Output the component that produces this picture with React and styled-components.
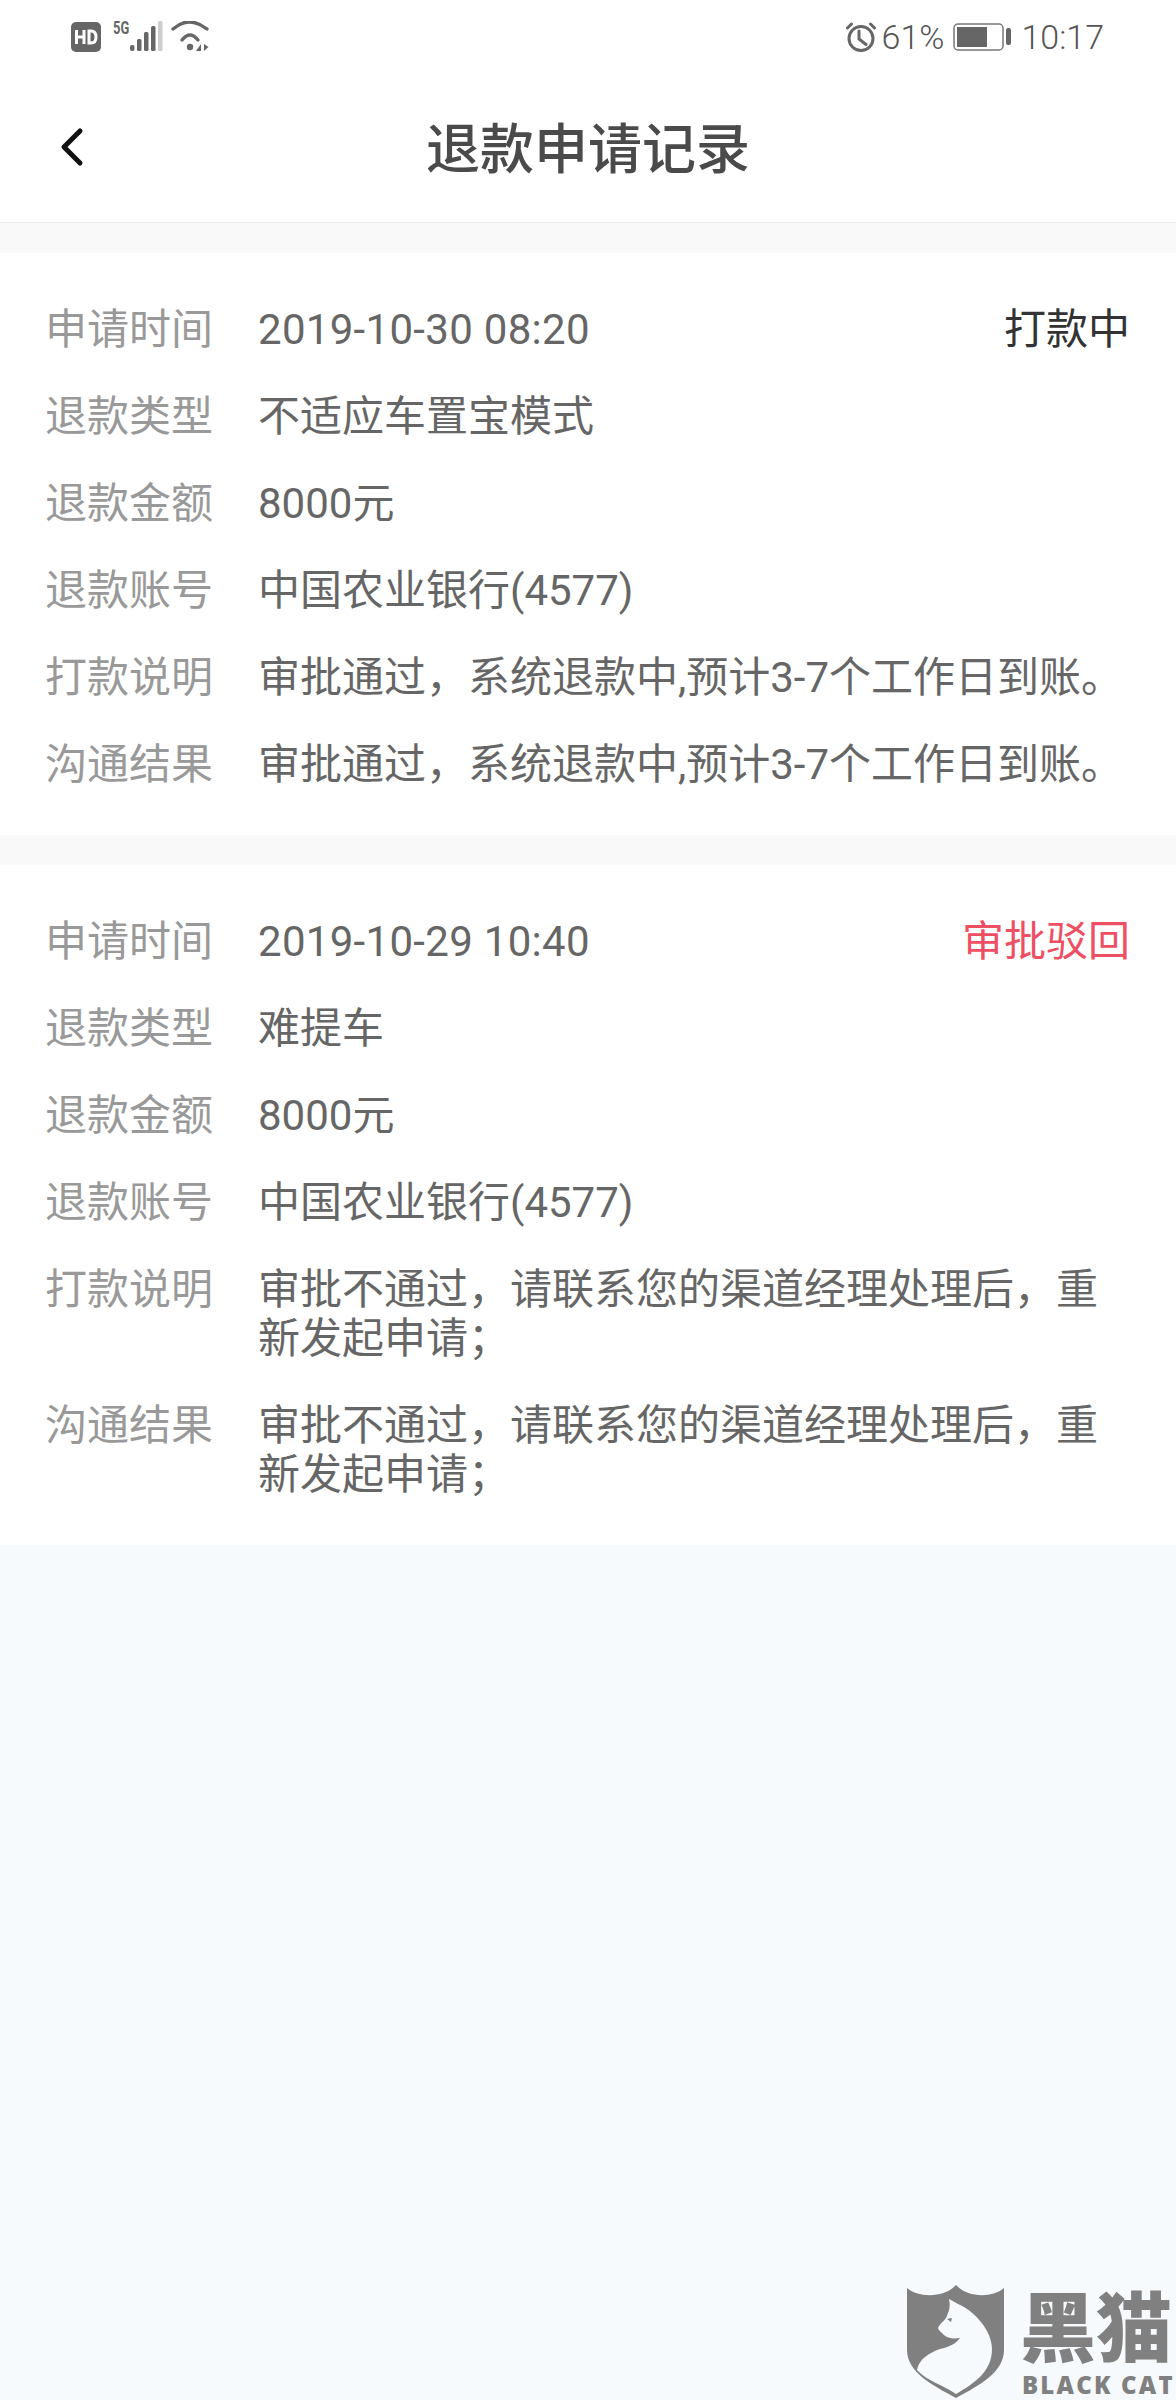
import React from "react";
import styled, { createGlobalStyle } from "styled-components";

const Global = createGlobalStyle`
  html, body { margin: 0; padding: 0; background: #f6fafd; }
  * { box-sizing: border-box; }
`;

const FONT = `Roboto, "Noto Sans CJK SC", sans-serif`;

const Page = styled.div`
  position: relative;
  width: 1176px;
  height: 2400px;
  overflow: hidden;
  background: #f6fafd;
  font-family: ${FONT};
`;

const Head = styled.header`
  height: 223px;
  background: #fff;
  border-bottom: 1px solid #e9e9e9;
  display: flex;
  flex-direction: column;
`;

const StatusBar = styled.div`
  height: 72px;
  padding: 1px 72px 0 71px;
  display: flex;
  align-items: center;
  justify-content: space-between;
  color: #666;
`;

const StatusGroup = styled.div`
  display: flex;
  align-items: center;
`;

const StatusText = styled.span`
  font-size: 34px;
  line-height: 36px;
  font-weight: 300;
  color: #555;
  margin-left: ${(p) => p.$ml || 0}px;
`;

const SignalWrap = styled.div`
  position: relative;
  width: 50px;
  height: 33px;
  margin-left: 12px;
`;

const FiveG = styled.span`
  position: absolute;
  left: 0;
  top: -2px;
  font-size: 19px;
  line-height: 20px;
  font-weight: 700;
  color: #666;
  white-space: nowrap;
  transform: scaleX(0.68);
  transform-origin: left center;
`;

const NavBar = styled.div`
  flex: 1;
  position: relative;
  display: flex;
  align-items: center;
  justify-content: center;
`;

const BackIcon = styled.svg`
  position: absolute;
  left: 58px;
  top: 53px;
`;

const Title = styled.h1`
  margin: 7px 0 0;
  font-size: 54px;
  line-height: 70px;
  font-weight: 500;
  color: #4a4a4a;
`;

const Gap = styled.div`
  height: 30px;
  background: #f9f9f9;
`;

const Card = styled.section`
  position: relative;
  background: #fff;
  padding: 52px 46px 46px 45px;
  display: flex;
  flex-direction: column;
  gap: 38px;
`;

const Row = styled.div`
  display: flex;
`;

const Label = styled.div`
  flex: 0 0 213px;
  font-size: 42px;
  line-height: 49px;
  color: #999;
`;

const Value = styled.div`
  flex: 1;
  min-width: 0;
  font-size: 42px;
  line-height: 49px;
  color: #666;
  letter-spacing: ${(p) => (p.$wide ? "0.3px" : "0")};
`;

const Status = styled.div`
  position: absolute;
  right: 46px;
  top: 52px;
  font-size: 42px;
  line-height: 49px;
  color: ${(p) => p.$color};
`;

const Watermark = styled.div`
  position: absolute;
  left: 907px;
  top: 2285px;
  display: flex;
  gap: 15px;
  color: #808080;
`;

const LogoText = styled.div`
  display: flex;
  flex-direction: column;
`;

const LogoCn = styled.div`
  font-size: 76px;
  line-height: 74px;
  font-weight: 900;
  margin-top: 8px;
  white-space: nowrap;
`;

const LogoEn = styled.div`
  font-family: "Open Sans", sans-serif;
  font-size: 24px;
  line-height: 24px;
  font-weight: 800;
  letter-spacing: 2.2px;
  margin: 6px 0 0 2px;
  white-space: nowrap;
`;

const Hd = () => (
  <svg width="30" height="30" viewBox="0 0 30 30">
    <rect width="30" height="30" rx="5" fill="#666" />
    <path d="M5.5 8v14M13 8v14M5.5 15h7.5" stroke="#fff" strokeWidth="3" fill="none" />
    <path d="M18 9v12h2c3 0 5-2 5-6s-2-6-5-6z" stroke="#fff" strokeWidth="3" fill="none" />
  </svg>
);

const Signal = () => (
  <SignalWrap>
    <FiveG>5G</FiveG>
    <svg width="50" height="33" viewBox="0 0 50 33">
      <g fill="#666">
        <rect x="17" y="25" width="4.5" height="6" rx="2" />
        <rect x="24" y="19" width="4.5" height="12" rx="1.5" />
        <rect x="31" y="12" width="4.5" height="19" rx="1.5" />
        <rect x="38" y="6" width="4.5" height="25" rx="1.5" />
      </g>
      <rect x="45" y="1" width="4.5" height="30" rx="1.5" fill="#ccc" />
    </svg>
  </SignalWrap>
);

const Wifi = () => (
  <svg width="38" height="31" viewBox="0 0 38 31" style={{ marginLeft: 8 }}>
    <g fill="none" stroke="#666" strokeWidth="3.4" strokeLinecap="round">
      <path d="M2 8Q18 -6 36 8" />
      <path d="M11 19Q19 9 27 19" />
    </g>
    <circle cx="19" cy="26" r="3.2" fill="#666" />
    <path d="M30 23v7h-5zM33 23v7l4.500-4z" fill="#666" />
  </svg>
);

const Alarm = () => (
  <svg width="30" height="30" viewBox="0 0 30 30" fill="none" stroke="#666" strokeWidth="3">
    <circle cx="15" cy="16.500" r="12" />
    <path d="M13 9v8l7 5.500M1.500 6l4-4M28.500 6l-4-4" strokeLinecap="round" />
  </svg>
);

const Battery = () => (
  <svg width="58" height="28" viewBox="0 0 58 28" style={{ marginLeft: 9 }}>
    <rect x="1" y="1" width="49" height="26" rx="4" fill="none" stroke="#777" strokeWidth="1.5" />
    <rect x="4" y="4" width="30" height="20" fill="#666" />
    <rect x="53" y="5" width="5" height="17" rx="2" fill="#666" />
  </svg>
);

const LogoMark = () => (
  <svg width="98" height="114" viewBox="0 0 98 114" style={{ flex: "none" }}>
    <path d="M0 3C10 12 36 14 49 0c13 14 38 12 48 3v62c0 22-24 35-48 48C25 100 0 87 0 65z" fill="#808080" />
    <path
      d="M42 14L51 19C68 26 85 46 85 64C85 86 68 98 49 109C36 100 20 96 10 85C12 74 22 68 33 64C42 62 50 58 53 53C46 54 40 53 37 50C34 47 32 46 31 43C33 38 38 36 40 31C41 27 44 24 42 14Z"
      fill="#f6fafd"
    />
    <path d="M40 34l5-1-1 4z" fill="#808080" />
  </svg>
);

const records = [
  {
    status: "打款中",
    color: "#333",
    rows: [
      ["申请时间", "2019-10-30 08:20", true],
      ["退款类型", "不适应车置宝模式"],
      ["退款金额", "8000元"],
      ["退款账号", "中国农业银行(4577)"],
      ["打款说明", "审批通过，系统退款中,预计3-7个工作日到账。"],
      ["沟通结果", "审批通过，系统退款中,预计3-7个工作日到账。"],
    ],
  },
  {
    status: "审批驳回",
    color: "#ee4f63",
    rows: [
      ["申请时间", "2019-10-29 10:40", true],
      ["退款类型", "难提车"],
      ["退款金额", "8000元"],
      ["退款账号", "中国农业银行(4577)"],
      ["打款说明", "审批不通过，请联系您的渠道经理处理后，重新发起申请；"],
      ["沟通结果", "审批不通过，请联系您的渠道经理处理后，重新发起申请；"],
    ],
  },
];

export default function App() {
  return (
    <Page>
      <Global />
      <Head>
        <StatusBar>
          <StatusGroup>
            <Hd />
            <Signal />
            <Wifi />
          </StatusGroup>
          <StatusGroup>
            <Alarm />
            <StatusText $ml={6}>61%</StatusText>
            <Battery />
            <StatusText $ml={10}>10:17</StatusText>
          </StatusGroup>
        </StatusBar>
        <NavBar>
          <BackIcon width="28" height="44" viewBox="0 0 28 44" fill="none" stroke="#111" strokeWidth="5" strokeLinecap="round" strokeLinejoin="round">
            <path d="M22 6L6 22l16 16" />
          </BackIcon>
          <Title>退款申请记录</Title>
        </NavBar>
      </Head>
      {records.map((r) => (
        <React.Fragment key={r.status}>
          <Gap />
          <Card>
            <Status $color={r.color}>{r.status}</Status>
            {r.rows.map(([k, v, wide]) => (
              <Row key={k}>
                <Label>{k}</Label>
                <Value $wide={wide}>{v}</Value>
              </Row>
            ))}
          </Card>
        </React.Fragment>
      ))}
      <Watermark>
        <LogoMark />
        <LogoText>
          <LogoCn>黑猫</LogoCn>
          <LogoEn>BLACK CAT</LogoEn>
        </LogoText>
      </Watermark>
    </Page>
  );
}
